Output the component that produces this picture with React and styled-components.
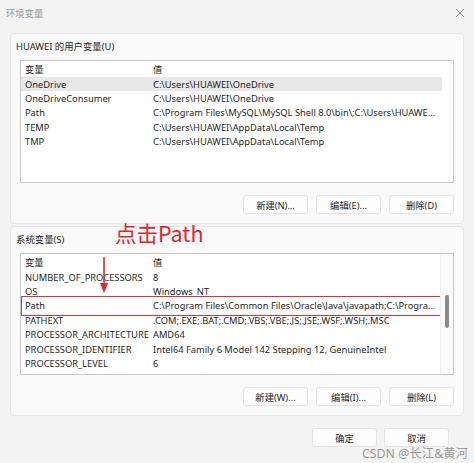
import styled, { createGlobalStyle } from "styled-components";

const GlobalStyle = createGlobalStyle`
  html, body { margin: 0; padding: 0; background: #f3f3f3; }
  * { box-sizing: border-box; }
`;

const userVars = [
  { name: "OneDrive", value: "C:\\Users\\HUAWEI\\OneDrive", selected: true },
  { name: "OneDriveConsumer", value: "C:\\Users\\HUAWEI\\OneDrive" },
  { name: "Path", value: "C:\\Program Files\\MySQL\\MySQL Shell 8.0\\bin\\;C:\\Users\\HUAWE..." },
  { name: "TEMP", value: "C:\\Users\\HUAWEI\\AppData\\Local\\Temp" },
  { name: "TMP", value: "C:\\Users\\HUAWEI\\AppData\\Local\\Temp" }
];

const systemVars = [
  { name: "NUMBER_OF_PROCESSORS", value: "8" },
  { name: "OS", value: "Windows_NT" },
  { name: "Path", value: "C:\\Program Files\\Common Files\\Oracle\\Java\\javapath;C:\\Progra...", marked: true },
  { name: "PATHEXT", value: ".COM;.EXE;.BAT;.CMD;.VBS;.VBE;.JS;.JSE;.WSF;.WSH;.MSC" },
  { name: "PROCESSOR_ARCHITECTURE", value: "AMD64" },
  { name: "PROCESSOR_IDENTIFIER", value: "Intel64 Family 6 Model 142 Stepping 12, GenuineIntel" },
  { name: "PROCESSOR_LEVEL", value: "6" },
  { name: "PROCESSOR_REVISION", value: "8e0c" }
];

const VarList = ({ rows, height, scroll }) => (
  <ListBox $height={height}>
    <Row $header>
      <NameCell>变量</NameCell>
      <ValueCell>值</ValueCell>
    </Row>
    {rows.map((r) => (
      <Row key={r.name} $selected={r.selected} $marked={r.marked}>
        <NameCell>{r.name}</NameCell>
        <ValueCell>{r.value}</ValueCell>
      </Row>
    ))}
    {scroll && (
      <ScrollTrack>
        <ScrollThumb />
      </ScrollTrack>
    )}
  </ListBox>
);

const App = () => {
  return (
    <>
      <GlobalStyle />
      <Window>
        <TitleBar>
          <Title>环境变量</Title>
          <CloseIcon width="10" height="10" viewBox="0 0 10 10">
            <path d="M1 1 L9 9 M9 1 L1 9" stroke="#8a8a8a" strokeWidth="1" fill="none" />
          </CloseIcon>
        </TitleBar>
        <Body>
          <Group $top={8}>
            <GroupLabel>HUAWEI 的用户变量(U)</GroupLabel>
            <VarList rows={userVars} height={123} />
            <ButtonRow>
              <Button>新建(N)...</Button>
              <Button>编辑(E)...</Button>
              <Button>删除(D)</Button>
            </ButtonRow>
          </Group>
          <Group $top={2}>
            <GroupLabel>系统变量(S)</GroupLabel>
            <Annotation>点击Path</Annotation>
            <Arrow width="12" height="40" viewBox="0 0 12 40">
              <path d="M6 0 L6 30" stroke="#e3262e" strokeWidth="1.6" fill="none" />
              <path d="M2 26 L6 36 L10 26 Z" fill="#e3262e" />
            </Arrow>
            <VarList rows={systemVars} height={122} scroll />
            <ButtonRow>
              <Button>新建(W)...</Button>
              <Button>编辑(I)...</Button>
              <Button>删除(L)</Button>
            </ButtonRow>
          </Group>
          <Footer>
            <Button>确定</Button>
            <Button>取消</Button>
          </Footer>
        </Body>
        <Watermark>CSDN @长江&amp;黄河</Watermark>
      </Window>
    </>
  );
};

const Window = styled.div`
  position: relative;
  width: 474px;
  height: 463px;
  overflow: hidden;
  background: #f3f3f3;
  font-family: "Noto Sans", "Noto Sans CJK SC", sans-serif;
  font-size: 9.3px;
  color: #1f1f1f;
`;

const TitleBar = styled.div`
  height: 25px;
  display: flex;
  align-items: center;
  justify-content: space-between;
  padding: 0 9px 0 6px;
`;

const Title = styled.span`
  font-size: 9.3px;
  color: #9a9a9a;
`;

const CloseIcon = styled.svg`
  display: block;
`;

const Body = styled.div`
  padding: 0 10px;
`;

const Group = styled.div`
  position: relative;
  margin-top: ${({ $top }) => $top}px;
  background: #f9f9f9;
  border: 1px solid #e6e6e6;
  border-radius: 4px;
  padding: 5px 9px 9px 9px;
`;

const GroupLabel = styled.div`
  font-size: 9.4px;
  line-height: 16px;
  margin-left: -4px;
  margin-bottom: 5px;
`;

const Annotation = styled.div`
  position: absolute;
  left: 104px;
  top: -8px;
  font-family: "Noto Sans CJK SC", "Noto Sans", sans-serif;
  font-size: 21.5px;
  line-height: 28px;
  color: #e3262e;
`;

const Arrow = styled.svg`
  position: absolute;
  left: 87px;
  top: 30px;
  z-index: 2;
`;

const ListBox = styled.div`
  position: relative;
  height: ${({ $height }) => $height}px;
  background: #ffffff;
  border: 1px solid #c9c9c9;
  overflow: hidden;
`;

const Row = styled.div`
  position: relative;
  display: flex;
  align-items: center;
  width: 421px;
  height: ${({ $header }) => ($header ? 16 : 14.4)}px;
  background: ${({ $selected }) => ($selected ? "#e8e8e8" : "transparent")};
  white-space: nowrap;
  ${({ $marked }) =>
    $marked &&
    `
    &::after {
      content: "";
      position: absolute;
      left: 0;
      right: 0;
      top: -2.5px;
      bottom: -2.5px;
      border: 1.5px solid #d9343b;
    }
  `}
`;

const NameCell = styled.div`
  width: 132px;
  padding-left: 4px;
  overflow: hidden;
`;

const ValueCell = styled.div`
  flex: 1;
  overflow: hidden;
`;

const ScrollTrack = styled.div`
  position: absolute;
  right: 0;
  top: 0;
  bottom: 0;
  width: 13px;
  background: #fafafa;
  border-left: 1px solid #f0f0f0;
`;

const ScrollThumb = styled.div`
  position: absolute;
  left: 4px;
  top: 41px;
  width: 4px;
  height: 33px;
  border-radius: 2px;
  background: #8a8a8a;
`;

const ButtonRow = styled.div`
  display: flex;
  justify-content: flex-end;
  gap: 8px;
  margin-top: 12px;
`;

const Button = styled.div`
  width: 65px;
  height: 19px;
  display: flex;
  align-items: center;
  justify-content: center;
  background: #fdfdfd;
  border: 1px solid #e3e3e3;
  border-radius: 3px;
  font-size: 9.3px;
`;

const Footer = styled.div`
  display: flex;
  justify-content: flex-end;
  gap: 7px;
  margin-top: 12px;
  padding-right: 15px;
`;

const Watermark = styled.div`
  position: absolute;
  right: 6px;
  bottom: 1px;
  font-size: 12.4px;
  color: rgba(120, 120, 120, 0.75);
`;

export default App;
